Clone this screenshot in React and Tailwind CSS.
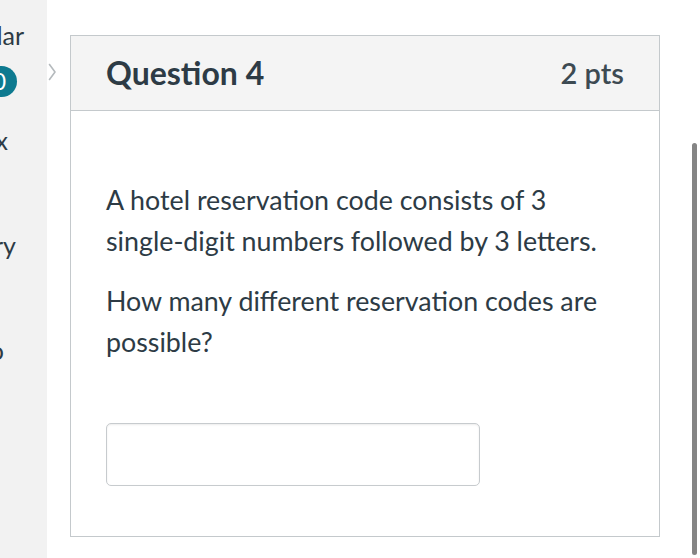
import React from "react";

const App = () => {
  return (
    <div
      className="flex w-[700px] h-[558px] bg-white overflow-hidden text-[#2d3b45]"
      style={{ fontFamily: "Lato, 'Open Sans', sans-serif" }}
    >
      {/* left nav, cut off */}
      <div className="w-[47px] shrink-0 bg-[#f2f2f2] overflow-hidden flex flex-col text-[25px] leading-none">
        <div className="flex justify-end whitespace-nowrap pr-[23px] mt-[23px]">Calendar</div>
        <div className="flex justify-end whitespace-nowrap pr-[30px] mt-[18px]">
          <span className="bg-[#0e7a90] text-white rounded-full px-[11px] h-[31px] leading-[31px] text-[23px]">10</span>
        </div>
        <div className="flex justify-end whitespace-nowrap pr-[39px] mt-[31px]">Inbox</div>
        <div className="flex justify-end whitespace-nowrap pr-[31px] mt-[80px]">History</div>
        <div className="flex justify-end whitespace-nowrap pr-[43px] mt-[80px]">Studio</div>
      </div>

      {/* chevron */}
      <div className="w-[23px] shrink-0 pt-[63px] pl-[1px]">
        <svg width="9" height="18" viewBox="0 0 9 18" fill="none">
          <path d="M1.5 1.5 L7 9 L1.5 16.5" stroke="#b5babd" strokeWidth="1.6" strokeLinecap="round" strokeLinejoin="round" />
        </svg>
      </div>

      {/* question card */}
      <div className="pt-[35px]">
        <div className="w-[590px] h-[502px] border-[1.5px] border-[#c4c9cc] flex flex-col">
          <div className="h-[75px] shrink-0 bg-[#f4f4f4] border-b-[1.5px] border-[#c4c9cc] flex items-center justify-between pl-[35px] pr-[35px]">
            <span className="text-[32px] font-bold">Question 4</span>
            <span className="text-[29px] font-semibold text-[#3d4a52]">2 pts</span>
          </div>
          <div className="pl-[35px] pr-[40px] pt-[69px] text-[26.8px] leading-[41px]">
            <p>A hotel reservation code consists of 3 single-digit numbers followed by 3 letters.</p>
            <p className="mt-[19px]">How many different reservation codes are possible?</p>
            <div className="mt-[60px] w-[374px] h-[63px] border-[1.5px] border-[#c7cbce] rounded-[5px] shadow-[inset_0_1px_2px_rgba(0,0,0,0.08)]" />
          </div>
        </div>
      </div>

      {/* scrollbar */}
      <div className="ml-auto pt-[143px] pr-[3px]">
        <div className="w-[5px] h-[412px] bg-[#858585] rounded-full" />
      </div>
    </div>
  );
};

export default App;
